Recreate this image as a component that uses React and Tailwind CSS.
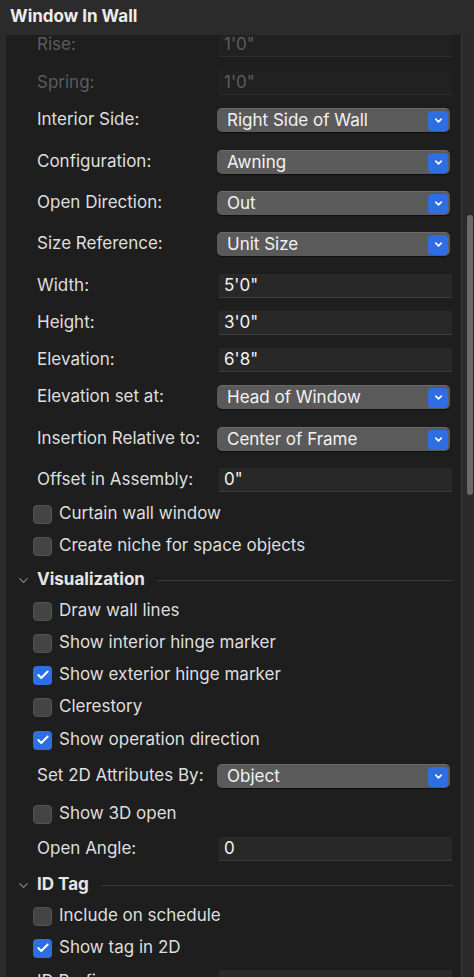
import { ChevronDown, Check } from 'lucide-react';

const font = { fontFamily: 'Inter, "Noto Sans", sans-serif' };

const rows = [
  { type: 'input', label: 'Rise:', value: `1'0"`, disabled: true, h: 'h-[38px]' },
  { type: 'input', label: 'Spring:', value: `1'0"`, disabled: true, h: 'h-[37px]' },
  { type: 'select', label: 'Interior Side:', value: 'Right Side of Wall', h: 'h-[42px]' },
  { type: 'select', label: 'Configuration:', value: 'Awning', h: 'h-[41px]' },
  { type: 'select', label: 'Open Direction:', value: 'Out', h: 'h-[41px]' },
  { type: 'select', label: 'Size Reference:', value: 'Unit Size', h: 'h-[42px]' },
  { type: 'input', label: 'Width:', value: `5'0"`, h: 'h-[37px]' },
  { type: 'input', label: 'Height:', value: `3'0"`, h: 'h-[37px]' },
  { type: 'input', label: 'Elevation:', value: `6'8"`, h: 'h-[37px]' },
  { type: 'select', label: 'Elevation set at:', value: 'Head of Window', h: 'h-[42px]' },
  { type: 'select', label: 'Insertion Relative to:', value: 'Center of Frame', h: 'h-[41px]' },
  { type: 'input', label: 'Offset in Assembly:', value: `0"`, h: 'h-[34px]' },
  { type: 'check', label: 'Curtain wall window', h: 'h-[32px]' },
  { type: 'check', label: 'Create niche for space objects', h: 'h-[34px]' },
  { type: 'section', label: 'Visualization', h: 'h-[31px]' },
  { type: 'check', label: 'Draw wall lines', h: 'h-[32px]' },
  { type: 'check', label: 'Show interior hinge marker', h: 'h-[32px]' },
  { type: 'check', label: 'Show exterior hinge marker', checked: true, h: 'h-[32px]' },
  { type: 'check', label: 'Clerestory', h: 'h-[33px]' },
  { type: 'check', label: 'Show operation direction', checked: true, h: 'h-[36px]' },
  { type: 'select', label: 'Set 2D Attributes By:', value: 'Object', h: 'h-[38px]' },
  { type: 'check', label: 'Show 3D open', h: 'h-[35px]' },
  { type: 'input', label: 'Open Angle:', value: '0', h: 'h-[36px]' },
  { type: 'section', label: 'ID Tag', h: 'h-[31px]' },
  { type: 'check', label: 'Include on schedule', h: 'h-[32px]' },
  { type: 'check', label: 'Show tag in 2D', checked: true, h: 'h-[34px]' },
  { type: 'input', label: 'ID Prefix:', value: '', h: 'h-[30px]' },
];

const Label = ({ children, disabled }) => (
  <span className={`w-[211px] shrink-0 pl-[31px] text-[17px] whitespace-nowrap ${disabled ? 'text-[#5c5c5c]' : 'text-[#dedede]'}`}>
    {children}
  </span>
);

const Row = ({ row }) => {
  if (row.type === 'section') {
    return (
      <div className={row.h}>
        <div className="flex items-center h-6 pr-[8px]">
          <ChevronDown className="ml-[10px] w-[15px] h-[15px] text-[#8a8a8a]" strokeWidth={1.75} />
          <span className="ml-[6px] text-[17px] font-bold text-[#e6e6e6]">{row.label}</span>
          <div className="flex-1 ml-[12px] h-px bg-[#3a3a3a]" />
        </div>
      </div>
    );
  }

  if (row.type === 'check') {
    return (
      <div className={row.h}>
        <div className="flex items-center h-6 pl-[27px]">
          {row.checked ? (
            <span className="w-[19px] h-[19px] rounded-[4px] bg-[#2d6ee3] flex items-center justify-center">
              <Check className="w-[14px] h-[14px] text-white" strokeWidth={3.5} />
            </span>
          ) : (
            <span className="w-[19px] h-[19px] rounded-[4px] bg-[#444] border border-[#525252]" />
          )}
          <span className="ml-[7px] text-[17px] text-[#dedede] whitespace-nowrap">{row.label}</span>
        </div>
      </div>
    );
  }

  if (row.type === 'select') {
    return (
      <div className={row.h}>
        <div className="flex items-center h-6">
          <Label>{row.label}</Label>
          <div className="w-[233px] h-6 rounded-[5px] bg-[#5a5a5a] border-t border-[#6a6a6a] shadow-[0_1px_1px_rgba(0,0,0,0.5)] flex items-center pl-[10px] pr-[2px]">
            <span className="flex-1 text-[17px] text-[#f2f2f2] whitespace-nowrap">{row.value}</span>
            <span className="w-[20px] h-[20px] rounded-[4px] bg-[#2f6de2] flex items-center justify-center">
              <ChevronDown className="w-[11px] h-[11px] text-white" strokeWidth={3.5} />
            </span>
          </div>
        </div>
      </div>
    );
  }

  return (
    <div className={row.h}>
      <div className="flex items-center h-6">
        <Label disabled={row.disabled}>{row.label}</Label>
        <div className={`ml-[2px] w-[233px] h-6 flex items-center pl-[5px] border-b ${row.disabled ? 'bg-[#212121] border-[#2c2c2c]' : 'bg-[#282828] border-[#3c3c3c]'}`}>
          <span className={`text-[17px] ${row.disabled ? 'text-[#5c5c5c]' : 'text-[#f2f2f2]'}`}>{row.value}</span>
        </div>
      </div>
    </div>
  );
};

export default function App() {
  return (
    <div className="w-[474px] h-[977px] bg-[#2b2b2b] flex flex-col overflow-hidden" style={font}>
      {/* Header */}
      <div className="h-[35px] shrink-0 flex items-center pl-[10px] pb-[2px] relative z-10 bg-[#2b2b2b]">
        <span className="text-[17px] font-bold text-[#ececec]">Window In Wall</span>
      </div>

      <div className="flex flex-1 min-h-0">
        <div className="w-[6px] shrink-0" />
        {/* Body */}
        <div className="w-[455px] bg-[#1e1e1e] overflow-hidden">
          <div className="mt-[-2px]">
            {rows.map((row, i) => (
              <Row key={i} row={row} />
            ))}
          </div>
        </div>
        {/* Scrollbar */}
        <div className="flex-1 border-l border-[#3a3a3a] bg-[#2a2a2a] pt-[180px] pl-[5px] pr-[1px]">
          <div className="h-[280px] rounded-full bg-[#6a6a6a]" />
        </div>
      </div>
    </div>
  );
}
